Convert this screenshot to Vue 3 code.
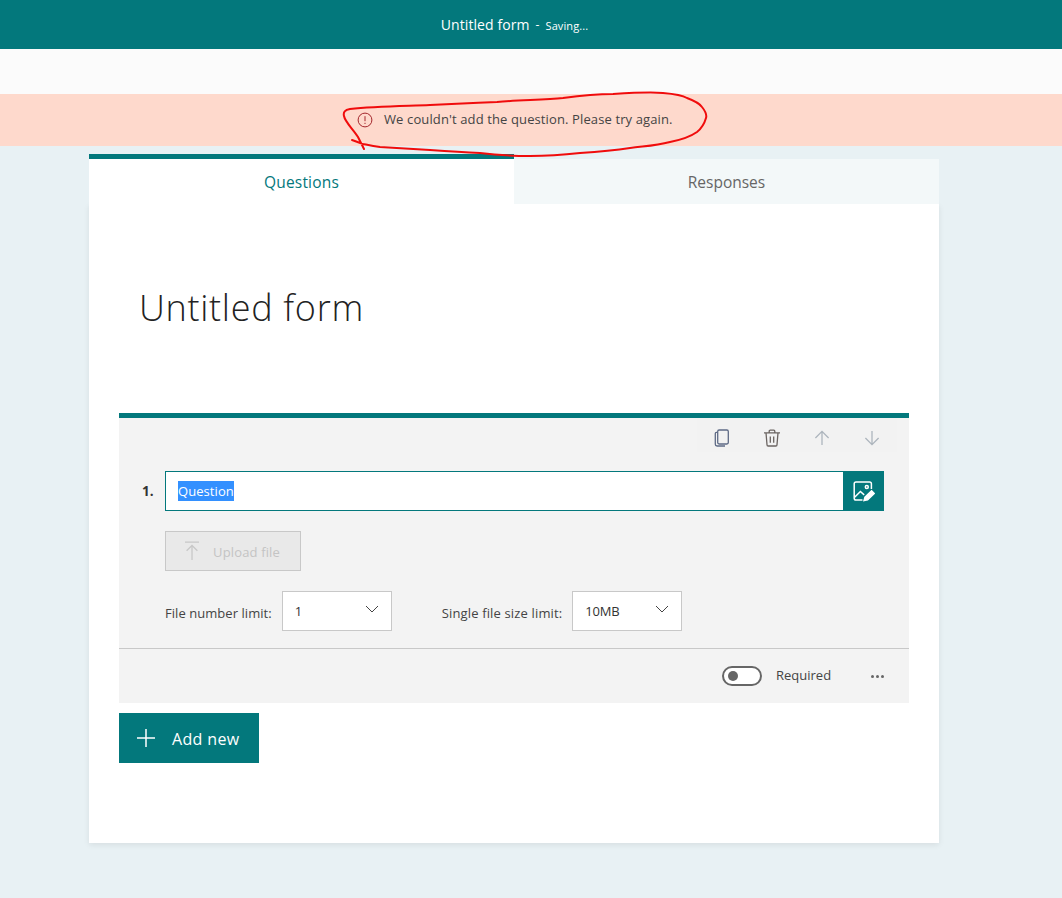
<script setup>
const iconTools = ['copy', 'trash', 'up', 'down']
</script>

<template>
  <div class="page">
    <header class="topbar">
      <span class="form-name">Untitled form</span>
      <span class="dash">-</span>
      <span class="saving">Saving...</span>
    </header>
    <div class="subbar"></div>
    <div class="alert">
      <svg class="alert-icon" width="16" height="16" viewBox="0 0 16 16" fill="none" stroke="#a4262c">
        <circle cx="8" cy="8" r="6.9" />
        <path d="M8 4.2v5M8 10.8v1.2" />
      </svg>
      <span class="alert-text">We couldn't add the question. Please try again.</span>
    </div>

    <main class="sheet-wrap">
      <div class="tabs">
        <div class="tab active">Questions</div>
        <div class="tab">Responses</div>
      </div>
      <section class="sheet">
        <h1 class="title">Untitled form</h1>

        <div class="qcard">
          <div class="toolbar-row">
            <div class="toolbar">
              <button v-for="t in iconTools" :key="t" class="tool">
                <svg v-if="t === 'copy'" width="18" height="18" viewBox="0 0 18 18" fill="none" stroke="#5f6b86" stroke-width="1.3">
                  <path d="M4.500 3.400H3.300c-.6 0-1 .4-1 1v10.800c0 1 .8 1.800 1.800 1.800h7.900" />
                  <rect x="4.700" y="1" width="10.600" height="14" rx="1.400" />
                </svg>
                <svg v-else-if="t === 'trash'" width="18" height="18" viewBox="0 0 18 18" fill="none" stroke="#6b6461" stroke-width="1.3">
                  <path d="M1 3.800h16M6.200 3.800V2.200c0-.6.4-1 1-1h3.600c.6 0 1 .4 1 1v1.600M3 3.800l1 12c0 .7.500 1.200 1.200 1.200h7.600c.7 0 1.200-.5 1.200-1.200l1-12M7.300 7.400v6.400M10.700 7.400v6.400" />
                </svg>
                <svg v-else-if="t === 'up'" width="18" height="18" viewBox="0 0 18 18" fill="none" stroke="#adb5bd" stroke-width="1.3">
                  <path d="M9 16V2.400M2.400 9 9 2.400 15.600 9" />
                </svg>
                <svg v-else width="18" height="18" viewBox="0 0 18 18" fill="none" stroke="#adb5bd" stroke-width="1.3">
                  <path d="M9 2v13.600M2.400 9 9 15.600 15.600 9" />
                </svg>
              </button>
            </div>
          </div>

          <div class="question-row">
            <span class="qnum">1.</span>
            <div class="qinput"><span class="selected">Question</span></div>
            <button class="media-btn">
              <svg width="22" height="22" viewBox="0 0 22 22" fill="none" stroke="#fff" stroke-width="1.500">
                <path d="M9.500 20H3C2 20 1.200 19.200 1.200 18.200V3.800C1.200 2.800 2 2 3 2h13.600c1 0 1.800.8 1.800 1.800V9" />
                <circle cx="13.800" cy="7" r="1.500" />
                <path d="M1.600 17.200 7.400 11.500l3.800 3.400" />
                <path d="M11 20.600l1-3.400 6.600-6.400 2.600 2.600-6.600 6.400z" fill="#fff" />
              </svg>
            </button>
          </div>

          <div class="upload-row">
            <div class="upload-btn">
              <svg width="16" height="20" viewBox="0 0 16 20" fill="none" stroke="#c8c8c8" stroke-width="1.300">
                <path d="M1 1.200h14M8 19V4.500M2.600 9.800 8 4.500l5.400 5.300" />
              </svg>
              <span>Upload file</span>
            </div>
          </div>

          <div class="limits-row">
            <label class="limit-label">File number limit:</label>
            <div class="select first-select">
              <span>1</span>
              <svg width="14" height="8" viewBox="0 0 14 8" fill="none" stroke="#444" stroke-width="1"><path d="M1 1l6 6 6-6" /></svg>
            </div>
            <label class="limit-label second-label">Single file size limit:</label>
            <div class="select">
              <span>10MB</span>
              <svg width="14" height="8" viewBox="0 0 14 8" fill="none" stroke="#444" stroke-width="1"><path d="M1 1l6 6 6-6" /></svg>
            </div>
          </div>

          <div class="qfooter">
            <span class="toggle"><span class="knob"></span></span>
            <span class="required">Required</span>
            <span class="more"><i></i><i></i><i></i></span>
          </div>
        </div>

        <button class="add-new">
          <svg width="18" height="18" viewBox="0 0 18 18" stroke="#fff" stroke-width="1.500"><path d="M9 0v18M0 9h18" /></svg>
          <span>Add new</span>
        </button>
      </section>
    </main>

    <svg class="scribble" width="1062" height="200" viewBox="0 0 1062 200" fill="none" stroke="#f00c0c" stroke-width="2" stroke-linejoin="round" stroke-linecap="round">
      <path d="M364 149 358 137C353 129 345 122 344 116 343 112 345 110 350 109 C375 106 405 106 430 105 C455 104 475 103 497 102 C520 100 545 100 563 98 C585 95 600 94 613 94 C630 93 650 92 663 93 C675 94 682 95 687 98 C695 101 700 104 702 107 C706 112 707 115 706 118 C704 125 702 128 697 132 C690 137 680 140 670 142 C655 146 645 146 630 148 C610 151 595 152 580 153 C562 155 545 156 530 156 C512 156 495 155 480 153 C460 152 445 151 430 150 C412 149 395 148 380 147 C372 146 368 145 363 144 L352 140" />
    </svg>
  </div>
</template>

<style>
html, body { margin: 0; background: #e8f1f4; }
</style>

<style scoped>
* { box-sizing: border-box; }
.page {
  position: relative;
  width: 1062px;
  height: 898px;
  overflow: hidden;
  background: #e8f1f4;
  font-family: "Open Sans", "Noto Sans", "Liberation Sans", sans-serif;
  color: #333;
}
.topbar {
  height: 49px;
  background: #03787c;
  color: #fff;
  display: flex;
  align-items: center;
  justify-content: center;
  gap: 5px;
  padding-right: 33px;
  font-size: 14px;
  letter-spacing: 0.08px;
}
.saving { font-size: 11px; letter-spacing: 0.1px; margin-top: 1px; }
.dash { font-size: 12px; margin: 0 1px; }
.subbar { height: 45px; background: #fbfbfb; }
.alert {
  height: 52px;
  background: #fed9cc;
  display: flex;
  align-items: center;
  padding-left: 357px;
  gap: 11px;
  font-size: 13px;
  letter-spacing: 0.12px;
  color: #444;
}
.alert-text { margin-top: -3px; }
.sheet-wrap { width: 850px; margin: 8px 0 0 89px; }
.tabs { display: flex; height: 50px; align-items: flex-end; }
.tab {
  flex: 1;
  height: 45px;
  background: #f3f8f9;
  color: #666;
  display: flex;
  align-items: center;
  justify-content: center;
  font-size: 15.500px;
  letter-spacing: 0;
}
.tab.active {
  height: 50px;
  background: #fff;
  border-top: 5px solid #03787c;
  color: #03787c;
  letter-spacing: 0.2px;
}
.sheet {
  height: 639px;
  background: #fff;
  box-shadow: 0 2px 6px rgba(0, 0, 0, 0.08);
  padding: 0 30px;
}
.title {
  margin: 0;
  padding: 79px 0 0 20px;
  height: 209px;
  font-size: 36px;
  line-height: 50px;
  font-weight: 300;
  color: #222;
  letter-spacing: 0.7px;
}
.qcard {
  height: 290px;
  background: #f3f3f3;
  border-top: 5px solid #03787c;
  display: flex;
  flex-direction: column;
}
.toolbar-row { display: flex; justify-content: flex-end; padding-right: 12px; height: 32px; }
.toolbar { display: flex; background: #f2f2f2; height: 34px; }
.tool {
  width: 50px;
  height: 40px;
  border: 0;
  background: transparent;
  padding: 0;
  display: flex;
  align-items: center;
  justify-content: center;
}
.question-row {
  display: flex;
  align-items: center;
  margin-top: 21px;
  padding: 0 25px 0 23px;
}
.qnum { width: 23px; font-size: 13.500px; font-weight: 700; color: #333; }
.qinput {
  flex: 1;
  height: 40px;
  background: #fff;
  border: 1px solid #03787c;
  border-right: 0;
  padding-left: 12px;
  display: flex;
  align-items: center;
  font-size: 13px;
}
.selected { background: #3390ff; color: #fff; line-height: 20px; letter-spacing: 0.07px; }
.media-btn {
  width: 41px;
  height: 40px;
  border: 0;
  padding: 0;
  background: #03787c;
  display: flex;
  align-items: center;
  justify-content: center;
}
.upload-row { padding: 20px 0 0 46px; }
.upload-btn {
  width: 136px;
  height: 40px;
  border: 1px solid #c8c8c8;
  background: #e9e9e9;
  color: #c4c4c4;
  display: flex;
  align-items: center;
  padding-left: 18px;
  gap: 13px;
  font-size: 13px;
  letter-spacing: 0.15px;
}
.upload-btn span { margin-top: 1px; }
.limits-row {
  display: flex;
  align-items: center;
  margin-top: 20px;
  padding-left: 46px;
}
.limit-label { font-size: 13px; letter-spacing: 0.05px; color: #444; padding-top: 4px; }
.select {
  width: 110px;
  height: 40px;
  background: #fff;
  border: 1px solid #c8c8c8;
  display: flex;
  align-items: center;
  justify-content: space-between;
  padding: 0 12px 1px 12px;
  font-size: 13px;
  letter-spacing: -0.2px;
  color: #333;
}
.select svg { margin-top: -4px; }
.first-select { margin-left: 10px; }
.limits-row .select:last-child { margin-left: 10px; }
.second-label { margin-left: 50px; letter-spacing: 0.15px; }
.qfooter {
  margin-top: 17px;
  height: 55px;
  border-top: 1px solid #c8c8c8;
  display: flex;
  align-items: center;
  padding-left: 603px;
}
.toggle {
  width: 40px;
  height: 20px;
  border: 2px solid #666;
  border-radius: 10px;
  background: #fff;
  display: flex;
  align-items: center;
  padding-left: 4px;
}
.knob { width: 10px; height: 10px; border-radius: 50%; background: #666; }
.required { margin: -2px 0 0 14px; font-size: 13px; letter-spacing: 0; color: #444; }
.more { margin-left: 40px; display: flex; gap: 2px; }
.more i { width: 3px; height: 3px; border-radius: 50%; background: #666; }
.add-new {
  width: 140px;
  height: 50px;
  margin-top: 10px;
  border: 0;
  padding: 0 0 0 18px;
  background: #03787c;
  color: #fff;
  display: flex;
  align-items: center;
  gap: 17px;
  font-family: inherit;
  font-size: 16px;
  letter-spacing: 0.35px;
}
.add-new span { margin-top: 1px; }
.scribble { position: absolute; left: 0; top: 0; pointer-events: none; }
</style>
